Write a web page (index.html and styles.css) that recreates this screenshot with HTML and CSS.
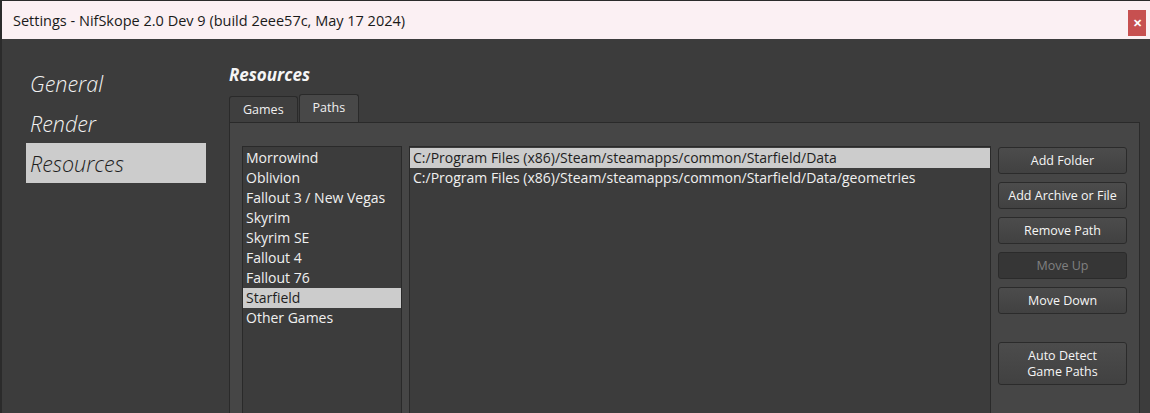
FILE: index.html
```html
<!DOCTYPE html>
<html lang="en">
<head>
  <meta charset="UTF-8" />
  <title>Settings - NifSkope</title>
  <link rel="stylesheet" href="styles.css">
</head>
<body>

<div class="window">
  <div class="titlebar">
    <span class="title">Settings - NifSkope 2.0 Dev 9 (build 2eee57c, May 17 2024)</span>
    <button class="close">&#x2715;</button>
  </div>

  <div class="content">
    <ul class="sidebar">
      <li>General</li>
      <li>Render</li>
      <li class="active">Resources</li>
    </ul>

    <div class="main">
      <h2>Resources</h2>
      <div class="tabs">
        <button class="tab">Games</button>
        <button class="tab active">Paths</button>
      </div>
      <div class="pane">
        <ul class="list games">
          <li>Morrowind</li>
          <li>Oblivion</li>
          <li>Fallout 3 / New Vegas</li>
          <li>Skyrim</li>
          <li>Skyrim SE</li>
          <li>Fallout 4</li>
          <li>Fallout 76</li>
          <li class="selected">Starfield</li>
          <li>Other Games</li>
        </ul>
        <ul class="list paths">
          <li class="selected">C:/Program Files (x86)/Steam/steamapps/common/Starfield/Data</li>
          <li>C:/Program Files (x86)/Steam/steamapps/common/Starfield/Data/geometries</li>
        </ul>
        <div class="buttons">
          <button>Add Folder</button>
          <button>Add Archive or File</button>
          <button>Remove Path</button>
          <button disabled>Move Up</button>
          <button>Move Down</button>
          <button class="tall">Auto Detect<br>Game Paths</button>
        </div>
      </div>
    </div>
  </div>
</div>

</body>
</html>
```

FILE: styles.css
```css
body {
  margin: 0;
  padding: 0;
  background: #3c3c3c;
  font-family: "Open Sans", "Noto Sans", sans-serif;
  overflow: hidden;
}
.window {
  height: 413px;
  border-top: 1px solid #2b2b2b;
  border-left: 2px solid #2b2b2b;
  box-sizing: border-box;
  display: flex;
  flex-direction: column;
}
.titlebar {
  height: 38px;
  background: #fbf0f3;
  display: flex;
  align-items: flex-start;
  justify-content: space-between;
  flex-shrink: 0;
}
.title {
  margin: 10px 0 0 11px;
  font-size: 14.5px;
  color: #1a1a1a;
}
.close {
  margin: 9px 4px 0 0;
  width: 18px;
  height: 26px;
  border: none;
  background: #c75050;
  color: #fff;
  font-size: 11px;
  font-weight: bold;
  padding: 0;
}
.content {
  flex: 1;
  display: flex;
  background: #3c3c3c;
  min-height: 0;
}
.sidebar {
  list-style: none;
  margin: 24px 0 0 24px;
  padding: 0;
  width: 203px;
}
.sidebar li {
  width: 180px;
  height: 40px;
  line-height: 42px;
  padding-left: 4px;
  box-sizing: border-box;
  font-size: 21.5px;
  font-style: italic;
  font-weight: 300;
  color: #f2f2f2;
}
.sidebar li.active {
  background: #cccccc;
  color: #1e1e1e;
}
.main {
  flex: 1;
  display: flex;
  flex-direction: column;
  padding-right: 10px;
  min-height: 0;
}
.main h2 {
  margin: 25px 0 0 0;
  height: 30px;
  font-size: 17px;
  font-style: italic;
  font-weight: bold;
  color: #f5f5f5;
  line-height: 22px;
}
.tabs {
  display: flex;
  align-items: flex-end;
  height: 28px;
}
.tab {
  height: 26px;
  padding: 0 13px;
  margin-right: 1px;
  border: 1px solid #2a2a2a;
  border-bottom: none;
  border-radius: 3px 3px 0 0;
  background: #3f3f3f;
  color: #f0f0f0;
  font-family: inherit;
  font-size: 12.5px;
}
.tab.active {
  height: 28px;
  padding: 0 13px 2px 13px;
  background: #484848;
}
.pane {
  flex: 1;
  display: flex;
  gap: 7px;
  padding: 23px 12px 0 12px;
  background: #464646;
  border: 1px solid #2a2a2a;
  border-bottom: none;
  min-height: 0;
}
.list {
  list-style: none;
  margin: 0;
  padding: 1px 0 0 0;
  background: #3c3c3c;
  border: 1px solid #2a2a2a;
  border-bottom: none;
}
.list li {
  height: 20px;
  line-height: 20px;
  padding-left: 3px;
  font-size: 14px;
  color: #f0f0f0;
  white-space: nowrap;
}
.list li.selected {
  background: #cccccc;
  color: #1e1e1e;
}
.games {
  width: 158px;
}
.paths {
  flex: 1;
}
.buttons {
  width: 129px;
  display: flex;
  flex-direction: column;
  gap: 8px;
  padding-top: 1px;
}
.buttons button {
  height: 27px;
  border: 1px solid #2b2b2b;
  border-radius: 3px;
  background: linear-gradient(#4c4c4c, #414141);
  color: #f5f5f5;
  font-family: inherit;
  font-size: 12.5px;
  padding: 0;
}
.buttons button:disabled {
  background: #363636;
  color: #808080;
}
.buttons button.tall {
  margin-top: 20px;
  height: 43px;
  line-height: 16px;
}
```
